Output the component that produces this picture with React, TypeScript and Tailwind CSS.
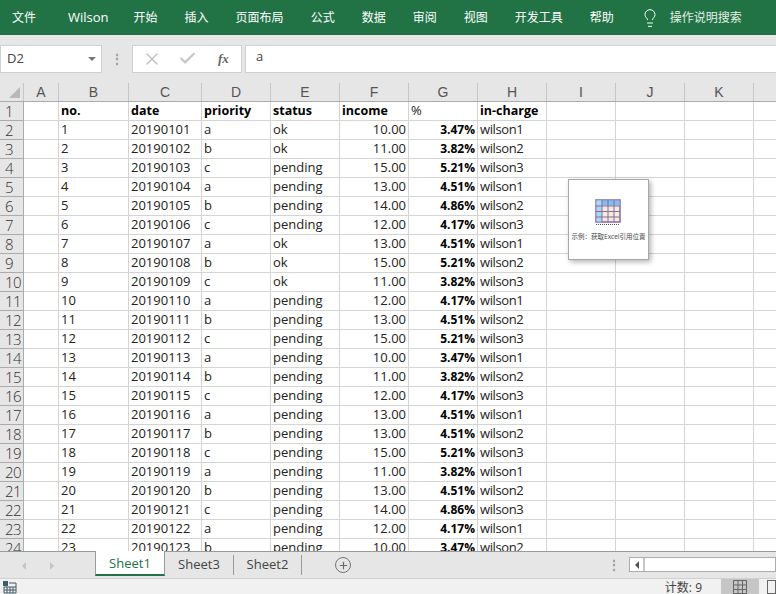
import React from "react";
import { Lightbulb, Plus, X, Check } from "lucide-react";

const menus = ["文件", "Wilson", "开始", "插入", "页面布局", "公式", "数据", "审阅", "视图", "开发工具", "帮助"];
// last column is cut off by the window, its letter never shows
const columns = ["A", "B", "C", "D", "E", "F", "G", "H", "I", "J", "K", ""];
const widths = [35, 70, 73, 69, 69, 69, 69, 69, 69, 69, 69, 69];
const incomes = [10, 11, 15, 13, 14, 12, 13, 15, 11, 12, 13, 15, 10, 11, 12, 13, 13, 15, 11, 13, 14, 12, 10];
const okRows = [1, 2, 7, 8, 9];

const font = "font-['Open_Sans','Noto_Sans_CJK_SC',sans-serif]";
const plain = "text-[13px] text-[#222]";
const head = "font-bold text-black text-[12.5px]";
const money = "text-[13px] text-[#222] text-right";
const pct = "font-bold text-black text-[12px] text-right";
const person = "text-[13px] text-[#222] tracking-[-0.4px]";

const Cell = ({ w, children, cls }: { w: number; children?: React.ReactNode; cls?: string }) => (
  <div
    className={`shrink-0 h-full border-r border-b border-[#d4d4d4] px-[2px] leading-[17px] whitespace-nowrap overflow-hidden ${cls ?? plain}`}
    style={{ width: w }}
  >
    {children}
  </div>
);

const RowHead = ({ n }: { n: number }) => (
  <div className="shrink-0 w-[24px] h-full bg-[#e6e6e6] border-r border-b border-[#ababab] pl-[5px] text-[15px] font-light leading-[18px] text-[#333] tracking-[-0.5px]">
    {n}
  </div>
);

const Row = ({ n, cells }: { n: number; cells: { text?: string; cls?: string }[] }) => (
  <div className="flex h-[19px]">
    <RowHead n={n} />
    {widths.map((w, i) => (
      <Cell key={i} w={w} cls={cells[i]?.cls}>
        {cells[i]?.text}
      </Cell>
    ))}
  </div>
);

const SheetIcon = () => (
  <svg width="27" height="27" viewBox="0 0 27 27">
    <rect x="1" y="1" width="24" height="22" fill="#f3ecdd" stroke="#8a6a9e" strokeWidth="1.5" />
    <rect x="1.5" y="1.5" width="23" height="5" fill="#7cc0f2" />
    <rect x="1.5" y="1.5" width="5.5" height="21" fill="#a6d8f8" />
    <path d="M7 1v22M13 1v22M19 1v22M1 7h24M1 12.5h24M1 18h24" stroke="#8a6a9e" strokeWidth="1" fill="none" />
    <path d="M1 25.5h24" stroke="#555" strokeWidth="1" strokeDasharray="1 1" />
  </svg>
);

export default function App() {
  return (
    <div className={`relative w-[776px] h-[594px] overflow-hidden flex flex-col bg-white ${font}`}>
      {/* ribbon tabs */}
      <div className="h-[35px] shrink-0 bg-[#217346] flex items-center pl-3 gap-[27px] text-[12px] text-white">
        {menus.map((m) => (
          <span key={m} className={m === "Wilson" ? "text-[13px] ml-[5px] -mr-[2px]" : ""}>
            {m}
          </span>
        ))}
        <Lightbulb size={20} strokeWidth={1.2} className="-ml-[1px] -mr-[17px]" />
        <span className="text-[#e4eee8]">操作说明搜索</span>
      </div>

      {/* formula bar */}
      <div className="h-[48px] shrink-0 bg-[#e6e6e6] flex items-center pb-[1px]">
        <div className="w-[102px] h-[28px] bg-white border border-[#d0d0d0] flex items-center justify-between pl-[6px] pr-[4px] text-[13px] text-[#444]">
          D2
          <span className="w-0 h-0 border-x-[4px] border-x-transparent border-t-[4px] border-t-[#777] mr-[1px]" />
        </div>
        <div className="w-[30px] flex justify-center text-[#999] text-[12px] leading-none font-bold">⋮</div>
        <div className="w-[110px] h-[28px] bg-white border border-[#d0d0d0] flex items-center pl-[9px]">
          <X size={20} strokeWidth={1.5} className="text-[#bdbdbd]" />
          <Check size={19} strokeWidth={3} className="text-[#c8c8c8] ml-[16px]" />
          <span className="font-['Liberation_Serif',serif] italic font-bold text-[13px] text-[#666] ml-[21px]">fx</span>
        </div>
        <div className="flex-1 ml-[3px] h-[28px] bg-white border-y border-l border-[#d0d0d0] pl-[10px] text-[13px] leading-[20px] text-[#444]">
          a
        </div>
      </div>

      {/* sheet grid */}
      <div className="flex-1 min-h-0 overflow-hidden">
        <div className="flex h-[19px] bg-[#e6e6e6] border-b border-[#ababab]">
          <div className="relative shrink-0 w-[24px] border-r border-[#c6c6c6]">
            <span className="absolute right-[3px] bottom-[3px] w-0 h-0 border-l-[11px] border-l-transparent border-b-[11px] border-b-[#b8b8b8]" />
          </div>
          {columns.map((c, i) => (
            <div
              key={i}
              className="shrink-0 border-r border-[#c6c6c6] text-center text-[14px] leading-[18px] text-[#555] font-['Liberation_Sans',sans-serif]"
              style={{ width: widths[i] }}
            >
              {c}
            </div>
          ))}
        </div>
        <Row
          n={1}
          cells={[
            {},
            { text: "no.", cls: head },
            { text: "date", cls: head },
            { text: "priority", cls: head },
            { text: "status", cls: head },
            { text: "income", cls: head },
            { text: "%" },
            { text: "in-charge", cls: head },
          ]}
        />
        {incomes.map((income, i) => {
          const no = i + 1;
          return (
            <Row
              key={no}
              n={no + 1}
              cells={[
                {},
                { text: String(no) },
                { text: String(20190101 + i) },
                { text: "abc"[i % 3] },
                { text: okRows.includes(no) ? "ok" : "pending" },
                { text: income.toFixed(2), cls: money },
                { text: ((income / 288) * 100).toFixed(2) + "%", cls: pct },
                { text: "wilson" + ((i % 3) + 1), cls: person },
              ]}
            />
          );
        })}
      </div>

      {/* sheet tabs */}
      <div className="h-[28px] shrink-0 bg-[#e6e6e6] border-t border-[#9b9b9b] border-b-[1px] border-b-[#d0d0d0] flex items-start text-[13px] text-[#444]">
        <div className="w-[95px] flex gap-[24px] pl-[22px] pt-[10px]">
          <span className="w-0 h-0 border-y-[4px] border-y-transparent border-r-[4px] border-r-[#c4c4c4]" />
          <span className="w-0 h-0 border-y-[4px] border-y-transparent border-l-[4px] border-l-[#c4c4c4]" />
        </div>
        <div className="-mt-[1px] w-[70px] h-[25px] bg-white border-x border-[#9b9b9b] border-b-2 border-b-[#217346] text-center text-[#217346] leading-[24px]">
          Sheet1
        </div>
        <div className="w-[69px] h-[20px] mt-[3px] border-r border-[#9b9b9b] text-center leading-[18px]">Sheet3</div>
        <div className="w-[68px] h-[20px] mt-[3px] border-r border-[#9b9b9b] text-center leading-[18px]">Sheet2</div>
        <div className="ml-[33px] mt-[5px] w-[16px] h-[16px] rounded-full border-[1.5px] border-[#777] flex items-center justify-center text-[#666]">
          <Plus size={11} strokeWidth={2.5} />
        </div>
        <div className="ml-auto w-[168px] mt-[5px] flex items-center">
          <span className="w-[16px] text-[#999] text-[12px] font-bold leading-none">⋮</span>
          <div className="ml-[5px] flex-1 h-[15px] bg-white border border-[#ababab] flex items-center">
            <div className="w-[15px] h-full border-r-2 border-[#c6c6c6] flex items-center justify-center">
              <span className="w-0 h-0 border-y-[4px] border-y-transparent border-r-[4px] border-r-[#555]" />
            </div>
          </div>
        </div>
      </div>

      {/* status bar */}
      <div className="h-[15px] shrink-0 bg-[#f1f1f1] flex items-stretch text-[12px] text-[#444] leading-[18px]">
        <svg width="14" height="14" viewBox="0 0 14 14" className="ml-[3px] mt-[1px] text-[#3f5a63]">
          <rect x="0" y="1" width="5" height="5" fill="currentColor" />
          <path d="M6 3h7v10H1V7h12M4 7v6M7 7v6M10 7v6M1 10h12" stroke="currentColor" fill="none" />
        </svg>
        <span className="ml-auto mr-[19px]">计数: 9</span>
        <div className="w-[38px] bg-[#c6c6c6] flex justify-center">
          <svg width="14" height="14" viewBox="0 0 14 14" className="mt-[1px]">
            <path d="M.5.5h13v13H.5zM.5 5h13M.5 9.5h13M5 .5v13M9.5.5v13" stroke="#666" fill="none" />
          </svg>
        </div>
        <div className="w-[17px] pl-[8px] pt-[1px]">
          <div className="w-[9px] h-[14px] border border-[#666]" />
        </div>
      </div>

      {/* floating shape */}
      <div className="absolute left-[568px] top-[179px] w-[81px] h-[81px] bg-white border border-[#a8a8a8] shadow-[2px_2px_5px_rgba(0,0,0,0.3)] flex flex-col items-center pt-[19px]">
        <SheetIcon />
        <div className="mt-[6px] text-[6.5px] leading-[10px] text-[#444] whitespace-nowrap">示例：获取Excel引用位置</div>
      </div>
    </div>
  );
}
